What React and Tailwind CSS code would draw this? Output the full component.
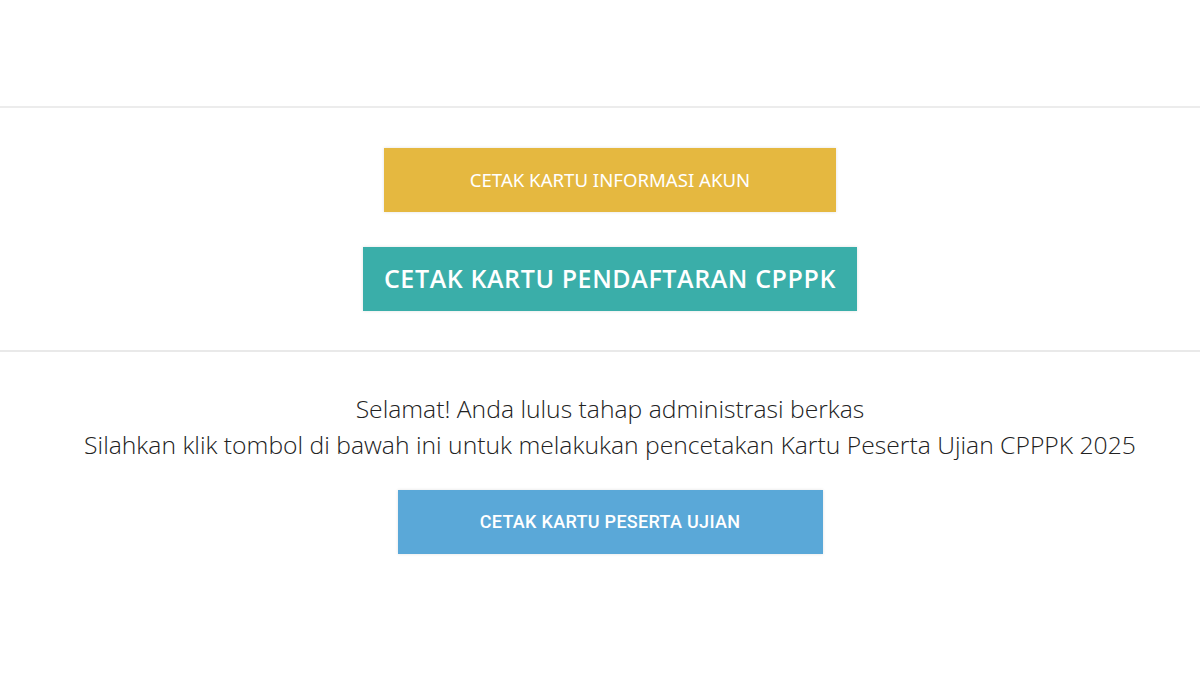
export default function App() {
  return (
    <div className="w-[1200px] h-[675px] bg-white overflow-hidden" style={{ fontFamily: '"Open Sans", sans-serif' }}>
      <div className="h-[106px]" />
      <div className="h-[2px] bg-[#ececec]" />
      <div className="flex flex-col items-center pl-[20px] pt-[40px] pb-[39px] gap-[35px]">
        <button className="w-[452px] h-[64px] bg-[#e5b840] text-white text-[18.6px] shadow-[0_0_3px_rgba(0,0,0,0.12)]" style={{ fontFamily: '"Noto Sans", sans-serif' }}>
          CETAK KARTU INFORMASI AKUN
        </button>
        <button className="w-[494px] h-[64px] bg-[#3aaea9] text-white text-[25px] font-semibold tracking-[0.6px] shadow-[0_0_3px_rgba(0,0,0,0.12)]" style={{ fontFamily: '"Open Sans", sans-serif' }}>
          CETAK KARTU PENDAFTARAN CPPPK
        </button>
      </div>
      <div className="h-[2px] bg-[#e9e9e9]" />
      <div className="flex flex-col items-center pl-[20px] pt-[39px] text-[#222] text-[24.7px] font-light leading-[36px]">
        <p>Selamat! Anda lulus tahap administrasi berkas</p>
        <p>Silahkan klik tombol di bawah ini untuk melakukan pencetakan Kartu Peserta Ujian CPPPK 2025</p>
        <button className="mt-[27px] w-[425px] h-[64px] bg-[#5aa8d8] text-white text-[18px] font-medium tracking-[0.3px] shadow-[0_0_3px_rgba(0,0,0,0.12)]" style={{ fontFamily: 'Roboto, sans-serif' }}>
          CETAK KARTU PESERTA UJIAN
        </button>
      </div>
    </div>
  )
}
